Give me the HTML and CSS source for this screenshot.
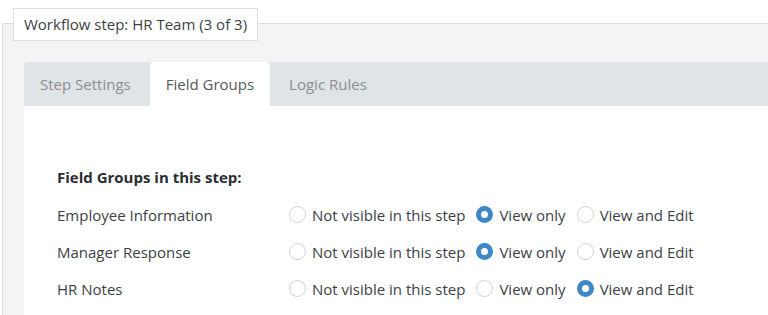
FILE: index.html
```html
<!DOCTYPE html>
<html lang="en">
<head>
  <meta charset="UTF-8" />
  <title>Workflow step: HR Team</title>
  <link rel="stylesheet" href="styles.css">
</head>
<body>
  <div class="step-panel">
    <div class="step-legend">Workflow step: HR Team (3 of 3)</div>

    <div class="tabs">
      <div class="tab">Step Settings</div>
      <div class="tab active">Field Groups</div>
      <div class="tab">Logic Rules</div>
    </div>

    <div class="tab-content">
      <div class="fg-title">Field Groups in this step:</div>

      <div class="fg-row">
        <div class="fg-name">Employee Information</div>
        <label class="opt"><input type="radio" name="g1"> Not visible in this step</label>
        <label class="opt"><input type="radio" name="g1" checked> View only</label>
        <label class="opt"><input type="radio" name="g1"> View and Edit</label>
      </div>
      <div class="fg-row">
        <div class="fg-name">Manager Response</div>
        <label class="opt"><input type="radio" name="g2"> Not visible in this step</label>
        <label class="opt"><input type="radio" name="g2" checked> View only</label>
        <label class="opt"><input type="radio" name="g2"> View and Edit</label>
      </div>
      <div class="fg-row">
        <div class="fg-name">HR Notes</div>
        <label class="opt"><input type="radio" name="g3"> Not visible in this step</label>
        <label class="opt"><input type="radio" name="g3"> View only</label>
        <label class="opt"><input type="radio" name="g3" checked> View and Edit</label>
      </div>
    </div>
  </div>
</body>
</html>
```

FILE: styles.css
```css
* { box-sizing: border-box; }

html, body {
  margin: 0;
  padding: 0;
  background: #fff;
  font-family: 'Open Sans', sans-serif;
  font-size: 15px;
  color: #3b3f45;
  overflow: hidden;
}

.step-panel {
  margin: 23px 0 0 2px;
  border-top: 1px solid #dcdfe0;
  border-left: 1px solid #dcdfe0;
  background: #f4f4f4;
  padding-left: 21px;
}

.step-legend {
  display: table;
  margin: -16px 0 0 -11px;
  padding: 0 10px;
  line-height: 31px;
  background: #fff;
  border: 1px solid #dcdfe0;
  color: #3b3f45;
}

.tabs {
  display: flex;
  margin-top: 21px;
  height: 44px;
  background: #dfe4e6;
  border-radius: 4px 0 0 0;
}

.tab {
  padding: 0 16px;
  margin-right: 3px;
  line-height: 44px;
  color: #8b8e91;
}

.tab.active {
  background: #fff;
  color: #55585c;
  border-radius: 4px 4px 0 0;
}

.tab-content {
  background: #fff;
  padding: 53px 0 8px 33px;
}

.fg-title {
  font-weight: bold;
  line-height: 37px;
  color: #2a2d31;
}

.fg-row {
  display: flex;
  align-items: center;
  height: 37px;
}

.fg-name {
  width: 232px;
}

.opt {
  display: flex;
  align-items: center;
  margin-right: 11px;
}

.opt input {
  appearance: none;
  -webkit-appearance: none;
  width: 17px;
  height: 17px;
  margin: 0 6px 0 0;
  border: 1px solid #cfd1d3;
  border-radius: 50%;
  background: #fff;
}

.opt input:checked {
  border: 5px solid #3f87c6;
}
```
